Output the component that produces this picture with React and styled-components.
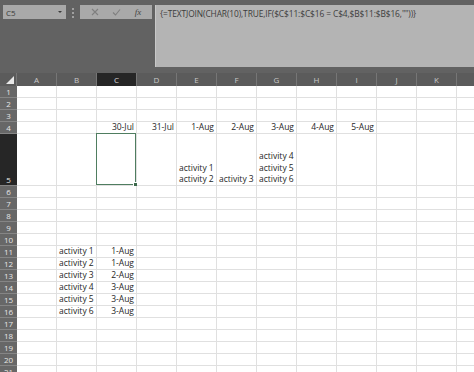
import React from 'react';
import styled, { createGlobalStyle } from 'styled-components';

const Global = createGlobalStyle`
  html, body { margin: 0; padding: 0; background: #ffffff; }
  body { font-family: "Open Sans", "Liberation Sans", sans-serif; }
`;

const Page = styled.div`
  width: 474px;
  height: 372px;
  overflow: hidden;
  background: #ffffff;
`;

const TopBar = styled.div`
  height: 73px;
  background: #626262;
  display: flex;
  align-items: flex-start;
  padding: 5px 0 0 3px;
  box-sizing: border-box;
`;

const NameBox = styled.div`
  width: 63px;
  height: 14px;
  background: #a9a9a9;
  display: flex;
  align-items: center;
  justify-content: space-between;
  padding: 0 4px 0 3px;
  box-sizing: border-box;
  font-size: 8px;
  color: #3a3a3a;
`;

const Arrow = styled.span`
  width: 0;
  height: 0;
  border-left: 2px solid transparent;
  border-right: 2px solid transparent;
  border-top: 2px solid #3a3a3a;
`;

const Dots = styled.div`
  width: 14px;
  display: flex;
  flex-direction: column;
  align-items: center;
  gap: 2px;
  padding-top: 3px;
  & > span {
    width: 2px;
    height: 2px;
    background: #a0a0a0;
  }
`;

const FxBox = styled.div`
  width: 72px;
  height: 14px;
  background: #a9a9a9;
  display: flex;
  align-items: center;
  justify-content: space-around;
  padding: 0 4px;
  box-sizing: border-box;
  color: #7c7c7c;
`;

const FxLabel = styled.span`
  font-family: "Liberation Serif", serif;
  font-style: italic;
  font-size: 9px;
  color: #444;
`;

const FormulaBox = styled.div`
  margin-left: 3px;
  flex: 1;
  height: 62px;
  background: #b4b4b4;
  border-left: 1px solid #c8c8c8;
  box-sizing: border-box;
  padding: 3px 0 0 4px;
  font-size: 8.4px;
  color: #3c3c3c;
  white-space: nowrap;
  letter-spacing: -0.1px;
`;

const Sheet = styled.div`
  display: grid;
  grid-template-columns: 17px repeat(12, 40px);
  grid-template-rows: 13px repeat(4, 12px) 52px repeat(16, 12px);
  font-size: 8.5px;
`;

const Corner = styled.div`
  background: #5b5b5b;
  display: flex;
  align-items: flex-end;
  justify-content: flex-end;
  padding: 0 2px 2px 0;
  border-right: 1px solid #777;
  box-sizing: border-box;
  & > span {
    width: 0;
    height: 0;
    border-left: 8px solid transparent;
    border-bottom: 8px solid #e8e8e8;
  }
`;

const ColHead = styled.div`
  background: ${(p) => (p.$active ? '#262626' : '#5b5b5b')};
  color: ${(p) => (p.$active ? '#dcdcdc' : '#c9c9c9')};
  border-right: 1px solid #767676;
  display: flex;
  align-items: center;
  justify-content: center;
  font-size: 8px;
  box-sizing: border-box;
`;

const RowHead = styled.div`
  background: ${(p) => (p.$active ? '#262626' : '#676767')};
  color: #e6e6e6;
  border-bottom: 1px solid #858585;
  display: flex;
  align-items: flex-end;
  justify-content: center;
  font-size: 8px;
  line-height: 11px;
  box-sizing: border-box;
`;

const Cell = styled.div`
  position: relative;
  border-right: 1px solid #e0e0e0;
  border-bottom: 1px solid #e0e0e0;
  box-sizing: border-box;
  display: flex;
  flex-direction: column;
  justify-content: flex-end;
  align-items: ${(p) => (p.$right ? 'flex-end' : 'flex-start')};
  padding: 0 2px;
  color: #262626;
  line-height: 11.7px;
  white-space: nowrap;
  overflow: visible;
`;

const Selection = styled.div`
  position: absolute;
  left: -1px;
  top: -1px;
  right: 0;
  bottom: 0;
  border: 1.5px solid #4f7d60;
  pointer-events: none;
  &::after {
    content: '';
    position: absolute;
    right: -3px;
    bottom: -3px;
    width: 3px;
    height: 3px;
    background: #3d6a4d;
    border: 1px solid #fff;
  }
`;

const cols = ['A', 'B', 'C', 'D', 'E', 'F', 'G', 'H', 'I', 'J', 'K', 'L'];

const data = {
  '4': { C: ['30-Jul'], D: ['31-Jul'], E: ['1-Aug'], F: ['2-Aug'], G: ['3-Aug'], H: ['4-Aug'], I: ['5-Aug'] },
  '5': { E: ['activity 1', 'activity 2'], F: ['activity 3'], G: ['activity 4', 'activity 5', 'activity 6'] },
  '11': { B: ['activity 1'], C: ['1-Aug'] },
  '12': { B: ['activity 2'], C: ['1-Aug'] },
  '13': { B: ['activity 3'], C: ['2-Aug'] },
  '14': { B: ['activity 4'], C: ['3-Aug'] },
  '15': { B: ['activity 5'], C: ['3-Aug'] },
  '16': { B: ['activity 6'], C: ['3-Aug'] },
};

const isDate = (s) => /-(Jul|Aug)$/.test(s);

export default function App() {
  const rows = Array.from({ length: 21 }, (_, i) => String(i + 1));
  return (
    <Page>
      <Global />
      <TopBar>
        <NameBox>
          C5
          <Arrow />
        </NameBox>
        <Dots>
          <span />
          <span />
          <span />
        </Dots>
        <FxBox>
          <svg width="8" height="8" viewBox="0 0 8 8">
            <path d="M1 1 L7 7 M7 1 L1 7" stroke="#7f7f7f" strokeWidth="1.1" />
          </svg>
          <svg width="9" height="8" viewBox="0 0 9 8">
            <path d="M1 4.5 L3.5 7 L8 1.5" stroke="#7f7f7f" strokeWidth="1.1" fill="none" />
          </svg>
          <FxLabel>fx</FxLabel>
        </FxBox>
        <FormulaBox>{'{=TEXTJOIN(CHAR(10),TRUE,IF($C$11:$C$16 = C$4,$B$11:$B$16,""))}'}</FormulaBox>
      </TopBar>
      <Sheet>
        <Corner>
          <span />
        </Corner>
        {cols.map((c) => (
          <ColHead key={c} $active={c === 'C'}>
            {c}
          </ColHead>
        ))}
        {rows.map((r) => (
          <React.Fragment key={r}>
            <RowHead $active={r === '5'}>{r}</RowHead>
            {cols.map((c) => {
              const lines = (data[r] && data[r][c]) || [];
              return (
                <Cell key={c} $right={lines.length > 0 && isDate(lines[0])}>
                  {lines.map((l) => (
                    <span key={l}>{l}</span>
                  ))}
                  {r === '5' && c === 'C' && <Selection />}
                </Cell>
              );
            })}
          </React.Fragment>
        ))}
      </Sheet>
    </Page>
  );
}
